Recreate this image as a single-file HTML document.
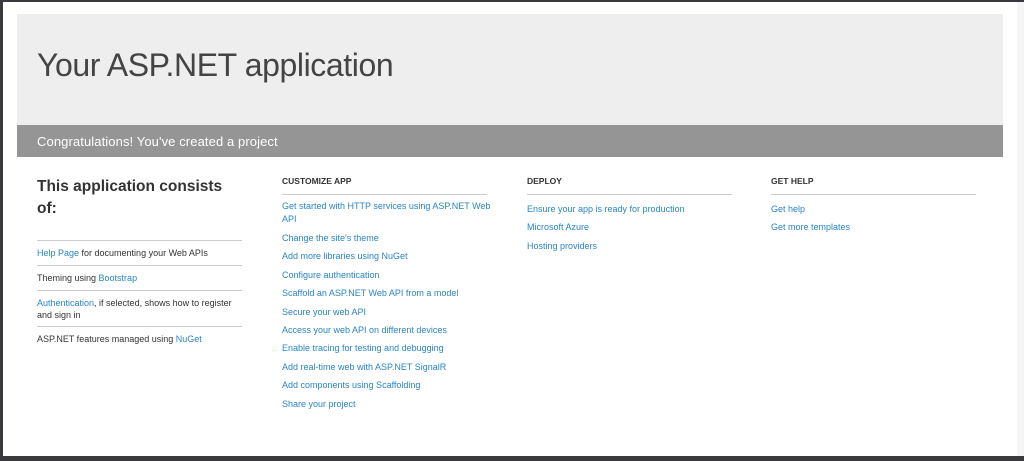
<!DOCTYPE html>
<html><head><style>
body{margin:0;width:1024px;height:461px;overflow:hidden;background:#fff;font-family:"Segoe UI","Liberation Sans",sans-serif;position:relative}
.frame-t{position:absolute;left:0;top:0;width:1024px;height:2px;background:#3a3a3e}
.frame-l{position:absolute;left:0;top:0;width:3px;height:461px;background:#3a3a3e}
.frame-b{position:absolute;left:0;top:456px;width:1024px;height:5px;background:#3a3a3e}
.sb{position:absolute;left:1017px;top:2px;width:7px;height:454px;background:#f5f5f5}
.jumbo{position:absolute;left:17px;top:14px;width:986px;height:111px;background:#eee}
.jumbo h1{position:absolute;left:20px;top:33px;margin:0;font-weight:normal;font-size:32px;color:#444;letter-spacing:-0.4px}
.bar{position:absolute;left:17px;top:125px;width:986px;height:32px;background:#959595}
.bar span{position:absolute;left:20px;top:9px;font-size:13px;color:#fff;letter-spacing:0.1px}
.col{position:absolute;top:170px;width:205px;font-size:9px;color:#333}
a{color:#2a84c4;text-decoration:none}
h2{margin:6px 0 0;font-size:15.5px;font-weight:bold;color:#333;line-height:22px}
h3{margin:6px 0 0;font-size:8.5px;font-weight:bold;color:#333}
.hr{border-top:1px solid #ccc;margin-top:8px}
.links div{line-height:18.4px}
.li{border-top:1px solid #ccc;padding:6px 0 5px;line-height:13px}
</style></head><body>
<div class="frame-t"></div><div class="frame-l"></div><div class="frame-b"></div><div class="sb"></div>
<div class="jumbo"><h1>Your ASP.NET application</h1></div>
<div class="bar"><span>Congratulations! You've created a project</span></div>
<div class="col" style="left:37px">
<h2>This application consists of:</h2>
<div style="height:20px"></div>
<div class="li"><a>Help Page</a> for documenting your Web APIs</div>
<div class="li"><span>Theming using </span><a>Bootstrap</a></div>
<div class="li" style="line-height:12px;padding:6px 0 5px"><a>Authentication</a>, if selected, shows how to register and sign in</div>
<div class="li"><span>ASP.NET features managed using </span><a>NuGet</a></div>
</div>
<div class="col" style="left:282px"><h3>CUSTOMIZE APP</h3><div class="hr"></div><div class="links" style="margin-top:5px">
<div style="line-height:13px;margin-bottom:3px;white-space:nowrap"><a>Get started with HTTP services using ASP.NET Web<br>API</a></div>
<div><a>Change the site's theme</a></div><div><a>Add more libraries using NuGet</a></div><div><a>Configure authentication</a></div><div><a>Scaffold an ASP.NET Web API from a model</a></div><div><a>Secure your web API</a></div><div><a>Access your web API on different devices</a></div><div><a>Enable tracing for testing and debugging</a></div><div><a>Add real-time web with ASP.NET SignalR</a></div><div><a>Add components using Scaffolding</a></div><div><a>Share your project</a></div>
</div></div>
<div class="col" style="left:527px"><h3>DEPLOY</h3><div class="hr"></div><div class="links" style="margin-top:5px">
<div><a>Ensure your app is ready for production</a></div><div><a>Microsoft Azure</a></div><div><a>Hosting providers</a></div></div></div>
<div class="col" style="left:771px"><h3>GET HELP</h3><div class="hr"></div><div class="links" style="margin-top:5px">
<div><a>Get help</a></div><div><a>Get more templates</a></div></div></div>
</body></html>
